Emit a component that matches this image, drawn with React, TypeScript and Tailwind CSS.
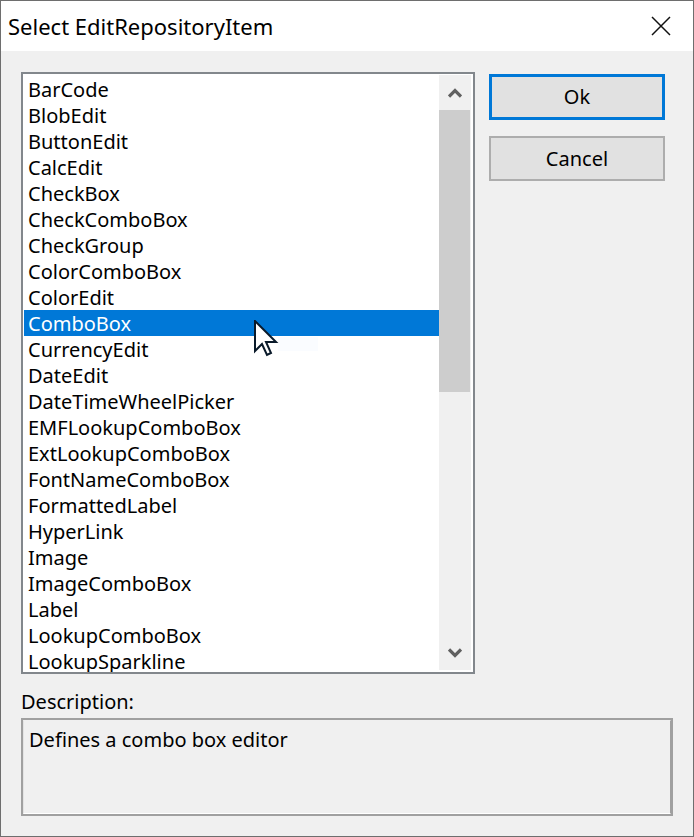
import React from "react";

const items = [
  "BarCode",
  "BlobEdit",
  "ButtonEdit",
  "CalcEdit",
  "CheckBox",
  "CheckComboBox",
  "CheckGroup",
  "ColorComboBox",
  "ColorEdit",
  "ComboBox",
  "CurrencyEdit",
  "DateEdit",
  "DateTimeWheelPicker",
  "EMFLookupComboBox",
  "ExtLookupComboBox",
  "FontNameComboBox",
  "FormattedLabel",
  "HyperLink",
  "Image",
  "ImageComboBox",
  "Label",
  "LookupComboBox",
  "LookupSparkline",
];

const selected = "ComboBox";

function Chevron({ down }: { down?: boolean }) {
  return (
    <svg width="14" height="10" viewBox="0 0 14 10" className={down ? "rotate-180" : ""}>
      <path d="M1 8.5 L7 2.5 L13 8.5" fill="none" stroke="#606060" strokeWidth="3.2" />
    </svg>
  );
}

function Cursor() {
  return (
    <svg width="26" height="38" viewBox="0 0 13 19" className="absolute left-[253px] top-[319px]">
      <path
        d="M0.5 0.5 L0.5 15.5 L4 12 L6.5 17.5 L8.5 16.5 L6 11 L11 11 Z"
        fill="#ffffff"
        stroke="#0a1a2a"
        strokeWidth="1"
        strokeLinejoin="miter"
      />
    </svg>
  );
}

export default function App() {
  return (
    <div
      className="relative flex h-[837px] w-[694px] flex-col border border-[#6e6e6e] bg-[#f0f0f0] text-[#000]"
      style={{ fontFamily: '"Noto Sans", "Open Sans", sans-serif' }}
    >
      {/* Title bar */}
      <div className="flex h-[50px] items-center justify-between bg-white pl-[7px] pr-[22px]">
        <span className="text-[22px] leading-none">Select EditRepositoryItem</span>
        <svg width="20" height="20" viewBox="0 0 20 20">
          <path d="M1 1 L19 19 M19 1 L1 19" stroke="#111" strokeWidth="1.5" />
        </svg>
      </div>

      {/* Body */}
      <div className="flex flex-1 flex-col pl-[20px] pt-[21px] text-[20px]">
        <div className="flex">
          {/* List box */}
          <div className="flex h-[602px] w-[454px] border-2 border-[#82878c] bg-white">
            <div className="flex-1 overflow-hidden pl-[1px] pt-[2px]">
              {items.map((it) => (
                <div
                  key={it}
                  className={`h-[26px] pl-[4px] pt-[1px] leading-[25px] ${
                    it === selected ? "bg-[#0078d7] text-white" : ""
                  }`}
                >
                  {it}
                </div>
              ))}
            </div>
            {/* Scrollbar */}
            <div className="mb-[2px] mr-[2px] mt-[1px] flex w-[32px] flex-col bg-[#f0f0f0]">
              <div className="flex h-[35px] items-center justify-center">
                <Chevron />
              </div>
              <div className="h-[282px] w-[31px] bg-[#cdcdcd]" />
              <div className="flex-1" />
              <div className="flex h-[35px] items-center justify-center">
                <Chevron down />
              </div>
            </div>
          </div>

          {/* Buttons */}
          <div className="ml-[14px] flex flex-col pt-[2px]">
            <button className="h-[46px] w-[176px] border-[3px] border-[#0078d7] bg-[#e1e1e1] text-[20px] leading-none">
              Ok
            </button>
            <button className="mt-[16px] h-[45px] w-[176px] border-2 border-[#adadad] bg-[#e1e1e1] text-[20px] leading-none">
              Cancel
            </button>
          </div>
        </div>

        <div className="mt-[14px] leading-[28px]">Description:</div>
        <div className="mt-[2px] h-[98px] w-[652px] border-2 border-[#a0a0a0]">
          <div className="h-full border border-b-white border-l-[#e3e3e3] border-r-[#a0a0a0] border-t-[#f0f0f0] px-[5px] pt-[6px] leading-[26px]">
            Defines a combo box editor
          </div>
        </div>
      </div>

      <div className="absolute left-[277px] top-[336px] h-[14px] w-[40px] bg-[#fafcff]" />
      <Cursor />
    </div>
  );
}
